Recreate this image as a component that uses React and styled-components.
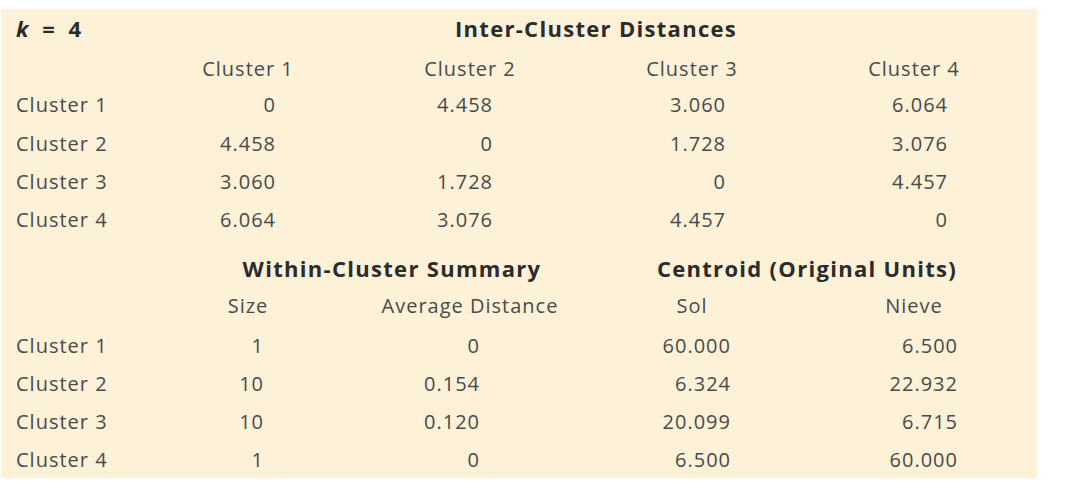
import React from 'react';
import styled, { createGlobalStyle } from 'styled-components';

const GlobalStyle = createGlobalStyle`
  html, body {
    margin: 0;
    padding: 0;
    background: #ffffff;
  }
  body {
    font-family: "Open Sans", Lato, "Liberation Sans", sans-serif;
  }
`;

const Page = styled.div`
  padding: 9px 33px 6px 1px;
  width: 1036px;
`;

const Panel = styled.div`
  background: #fdf1d8;
  height: 469px;
  padding-left: 15px;
  display: grid;
  grid-template-columns: 121px repeat(4, 222px);
  grid-template-rows: 31px 41px 36px 39px 38px 38px 48px 38px 40px 38px 38px 38px;
  align-items: end;
  color: #4a4a4a;
  font-size: 20px;
  letter-spacing: 1px;
`;

const Cell = styled.div`
  text-align: ${p => (p.$num ? 'right' : p.$head ? 'center' : 'left')};
  padding-right: ${p => (p.$pad ? `${p.$pad}px` : '0')};
  white-space: nowrap;
  line-height: 24px;
`;

const Title = styled.div`
  grid-column: ${p => p.$span};
  text-align: center;
  padding-left: ${p => p.$shift || 0}px;
  font-weight: 700;
  font-size: 22px;
  line-height: 24px;
  letter-spacing: 1.3px;
  color: #2b2b2b;
  white-space: nowrap;
`;

const KLabel = styled.div`
  font-weight: 700;
  font-size: 22px;
  line-height: 24px;
  word-spacing: 6px;
  color: #2b2b2b;
  i {
    font-style: italic;
  }
`;

const clusters = ['Cluster 1', 'Cluster 2', 'Cluster 3', 'Cluster 4'];

const distances = [
  ['0', '4.458', '3.060', '6.064'],
  ['4.458', '0', '1.728', '3.076'],
  ['3.060', '1.728', '0', '4.457'],
  ['6.064', '3.076', '4.457', '0'],
];

const summary = [
  ['1', '0', '60.000', '6.500'],
  ['10', '0.154', '6.324', '22.932'],
  ['10', '0.120', '20.099', '6.715'],
  ['1', '0', '6.500', '60.000'],
];

const topPads = [83, 88, 77, 77];
const bottomPads = [95, 101, 72, 67];

function App() {
  return (
    <>
      <GlobalStyle />
      <Page>
        <Panel>
          <KLabel><i>k</i> = 4</KLabel>
          <Title $span="2 / 6" $shift={30}>Inter-Cluster Distances</Title>

          <Cell />
          {clusters.map(c => <Cell key={c} $head>{c}</Cell>)}

          {distances.map((row, i) => (
            <React.Fragment key={`d${i}`}>
              <Cell>{clusters[i]}</Cell>
              {row.map((v, j) => <Cell key={j} $num $pad={topPads[j]}>{v}</Cell>)}
            </React.Fragment>
          ))}

          <Cell />
          <Title $span="2 / 4" $shift={66}>Within-Cluster Summary</Title>
          <Title $span="4 / 6" $shift={8}>Centroid (Original Units)</Title>

          <Cell />
          <Cell $head>Size</Cell>
          <Cell $head>Average Distance</Cell>
          <Cell $head>Sol</Cell>
          <Cell $head>Nieve</Cell>

          {summary.map((row, i) => (
            <React.Fragment key={`s${i}`}>
              <Cell>{clusters[i]}</Cell>
              {row.map((v, j) => <Cell key={j} $num $pad={bottomPads[j]}>{v}</Cell>)}
            </React.Fragment>
          ))}
        </Panel>
      </Page>
    </>
  );
}

export default App;
